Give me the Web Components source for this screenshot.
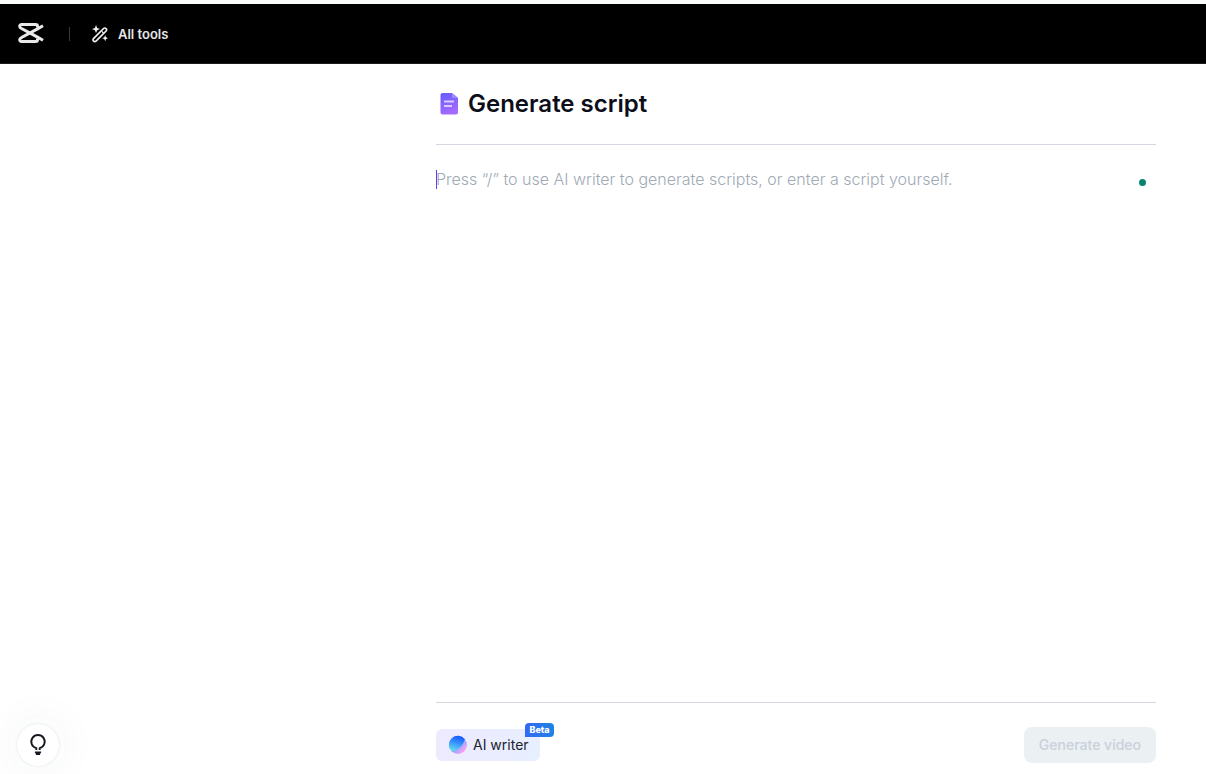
<!DOCTYPE html>
<html lang="en">
<head>
<meta charset="utf-8">
<meta name="viewport" content="width=device-width, initial-scale=1">
<title>Generate script</title>
<style>
html, body { height: 100%; margin: 0; }
body { background: #fff; color: #0c0f1a; font-family: Inter, "Liberation Sans", sans-serif; }
</style>
</head>
<body>
<script-app></script-app>
<script>
function define(name, html) {
  const template = document.createElement('template');
  template.innerHTML = html;
  customElements.define(name, class extends HTMLElement {
    constructor() {
      super();
      this.attachShadow({ mode: 'open' }).append(template.content.cloneNode(true));
    }
  });
}

define('top-bar', `
<style>
:host { display: flex; align-items: center; height: 60px; padding: 0 16px; box-sizing: border-box; background: #000; color: #e6e6e6; border-bottom: 1px solid #1c1c1c; }
a { display: flex; align-items: center; gap: 10px; color: inherit; text-decoration: none; font-size: 13px; line-height: 20px; font-weight: 600; }
svg { display: block; }
.rule { width: 1px; height: 14px; margin: 0 22px 0 24px; background: #3a3a3a; }
</style>
<a href="#" aria-label="CapCut home"><svg width="29" height="24" viewBox="0 0 29 24" fill="none" stroke="#e9e9e9" stroke-width="3" stroke-linejoin="round"><path d="M27 3.800 21.500 6.900 6 15.200Q3.700 16.500 3.700 17.600 3.700 19.500 5.600 19.500H19.600Q21.500 19.500 21.500 17.700V16.500"/><path d="M27 18.200 21.500 15.100 6 6.800Q3.700 5.500 3.700 4.400 3.700 2.500 5.600 2.500H19.600Q21.500 2.500 21.500 4.300V5.500"/></svg></a>
<span class="rule"></span>
<a href="#"><svg width="16" height="18" viewBox="0 0 16 18"><path d="M1.500 13.600 11.600 3.500a1.600 1.600 0 0 1 2.300 0l.2.2a1.600 1.600 0 0 1 0 2.300L4 16.100a1.600 1.600 0 0 1-2.300 0l-.2-.2a1.600 1.600 0 0 1 0-2.300Z" fill="none" stroke="#f0f0f0" stroke-width="1.700"/><path d="m9.800 6.400 1.800 1.800" stroke="#f0f0f0" stroke-width="1.200"/><path d="M4 0 5.200 2.900 8 4 5.200 5.200 4 8 2.900 5.200 0 4 2.900 2.900ZM13.200 10.200l.9 2.100 1.900.9-1.900.9-.9 2.100-.9-2.100-2.100-.9 2.100-.9Z" fill="#f0f0f0"/></svg><slot></slot></a>
`);

define('script-heading', `
<style>
:host { display: flex; align-items: center; gap: 8px; height: 80px; padding-left: 4px; border-bottom: 1px solid #d3d8e0; }
svg { display: block; }
h1 { margin: 0; font-size: 24px; line-height: 32px; font-weight: 600; }
</style>
<svg width="20" height="24" viewBox="0 0 20 24"><defs><linearGradient id="page" x1="0" y1="0" x2=".35" y2="1"><stop stop-color="#665cff"/><stop offset="1" stop-color="#a56aff"/></linearGradient></defs><path d="M2.500 1H12l6 5v14.500a2 2 0 0 1-2 2H2.500a2 2 0 0 1-2-2V3a2 2 0 0 1 2-2Z" fill="url(#page)"/><path d="m12 1 6 5h-4.500A1.500 1.500 0 0 1 12 4.500Z" fill="#9c8aff"/><path d="M4 9.500h10M4 14h8" stroke="#d8ceff" stroke-width="1.800"/></svg>
<h1><slot></slot></h1>
`);

define('script-editor', `
<style>
:host { display: flex; flex: 1; position: relative; padding-top: 22px; border-bottom: 1px solid #d3d8e0; }
textarea { flex: 1; min-width: 0; display: block; padding: 0; border: 0; outline: 0; resize: none; background: none; font: 300 16px/24px Inter, "Liberation Sans", sans-serif; color: #0c0f1a; }
textarea::placeholder { color: #a0aab6; opacity: 1; }
.caret { position: absolute; left: 0; top: 25px; width: 1px; height: 19px; background: #5b3ff0; }
.status { position: absolute; right: 10px; top: 34px; width: 7px; height: 7px; border-radius: 50%; background: #078571; }
</style>
<textarea aria-label="Script" placeholder="Press “/” to use AI writer to generate scripts, or enter a script yourself."></textarea>
<span class="caret"></span><span class="status"></span>
`);

define('writer-button', `
<style>
:host { display: block; position: relative; }
button { display: flex; align-items: center; gap: 5px; height: 32px; padding: 0 11px 0 12px; border: 0; border-radius: 6px; background: linear-gradient(100deg, #eeeaff, #e7efff); color: #20232d; font: 400 14px/20px Inter, "Liberation Sans", sans-serif; }
svg { display: block; }
.badge { position: absolute; right: -14px; top: -6px; padding: 0 4px; border-radius: 4px 4px 4px 0; background: linear-gradient(90deg, #3567f5, #1e84e4); color: #fff; font-size: 9px; line-height: 14px; font-weight: 800; }
</style>
<button type="button"><svg width="20" height="20" viewBox="0 0 20 20"><defs><linearGradient id="base" x1="0" y1="0" x2="1" y2="1"><stop offset=".35" stop-color="#48aef8"/><stop offset=".8" stop-color="#efa2f7"/></linearGradient><linearGradient id="ball" x1=".7" y1="0" x2=".4" y2="1"><stop stop-color="#1555fb"/><stop offset=".45" stop-color="#368dff"/><stop offset="1" stop-color="#61dceb"/></linearGradient></defs><circle cx="10" cy="10" r="9" fill="url(#base)"/><path d="M16.800 4.100C15 11 10 15.500 3.600 16.300A9 9 0 1 1 16.800 4.100Z" fill="url(#ball)"/></svg><slot></slot></button>
<span class="badge">Beta</span>
`);

define('generate-button', `
<style>
:host { display: block; }
button { display: block; height: 36px; padding: 0 15px; border: 0; border-radius: 8px; background: #ebf0f3; color: #c9d1da; font: 500 14px/20px Inter, "Liberation Sans", sans-serif; }
</style>
<button type="button" disabled><slot></slot></button>
`);

define('tips-button', `
<style>
:host { display: block; }
button { display: grid; place-items: center; width: 42px; height: 42px; padding: 0; border: 0; border-radius: 50%; background: #fff; box-shadow: 0 0 2px rgba(30,60,80,.16), 0 0 48px rgba(30,70,80,.07); }
svg { display: block; }
</style>
<button type="button" aria-label="Tips"><svg width="20" height="24" viewBox="0 0 20 24"><path d="M8.300 17v-1.800A6.700 6.700 0 1 1 11.700 15.200V17" fill="none" stroke="#161823" stroke-width="1.900"/><path d="M6.900 18.600h6.200v1.200l-1 1v1.100H7.900v-1.100l-1-1Z" fill="#161823"/></svg></button>
`);

define('script-app', `
<style>
:host { display: flex; flex-direction: column; min-height: 100vh; box-sizing: border-box; border-top: 4px solid #fafbfb; }
main { flex: 1; display: grid; grid-template-columns: 436px minmax(0, 1fr) 50px; overflow: hidden; }
aside { display: flex; align-items: flex-end; padding: 0 0 8px 17px; }
section { display: flex; flex-direction: column; }
footer { display: flex; align-items: center; justify-content: space-between; height: 71px; padding-top: 13px; box-sizing: border-box; }
</style>
<top-bar>All tools</top-bar>
<main>
<aside><tips-button></tips-button></aside>
<section aria-label="Script">
<script-heading>Generate script</script-heading>
<script-editor></script-editor>
<footer><writer-button>AI writer</writer-button><generate-button>Generate video</generate-button></footer>
</section>
</main>
`);
</script>
</body>
</html>
